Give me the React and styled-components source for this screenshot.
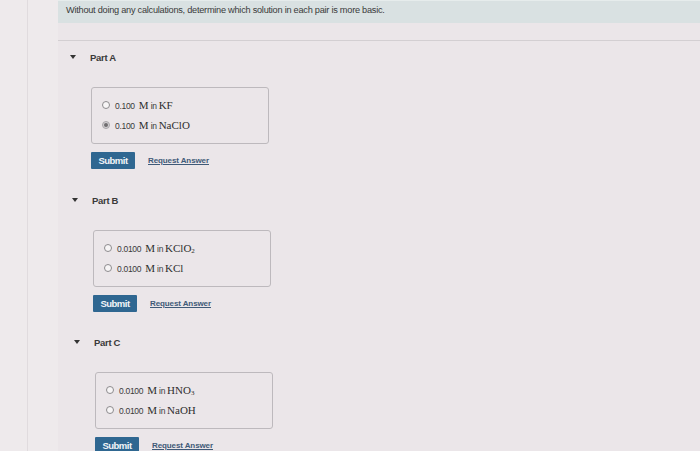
import React from "react";
import styled, { createGlobalStyle } from "styled-components";

const Global = createGlobalStyle`
  html, body { margin: 0; padding: 0; }
  body { background: #ebe6e9; font-family: "Liberation Sans", Arial, sans-serif; color: #333; }
`;

const Page = styled.div`
  display: flex;
  width: 700px;
  min-height: 451px;
  background: #ebe6e9;
  overflow: hidden;
`;

const Gutter = styled.div`
  width: 27px;
  flex: none;
  background: #eeeaec;
  border-right: 1px solid #e0dbde;
`;

const GutterInner = styled.div`
  width: 30px;
  flex: none;
  background: #eeeaec;
`;

const Main = styled.div`
  flex: 1;
  display: flex;
  flex-direction: column;
`;

const Banner = styled.div`
  height: 23px;
  background: #d9e1e2;
  border-top: 1px solid #e6ecec;
  box-sizing: border-box;
  padding-left: 8px;
  font-size: 9.2px;
  line-height: 19px;
  letter-spacing: -0.25px;
  color: #3a3a3a;
  white-space: nowrap;
`;

const Divider = styled.div`
  margin-top: 17px;
  border-top: 1px solid #d3cfd2;
`;

const Section = styled.section`
  display: flex;
  flex-direction: column;
  padding-left: ${(p) => p.$indent}px;
  margin-top: ${(p) => p.$top}px;
`;

const Header = styled.div`
  height: 20px;
  display: flex;
  align-items: center;
  font-size: 9.5px;
  font-weight: bold;
  color: #3a3a3a;
  letter-spacing: -0.3px;
`;

const Caret = styled.span`
  width: 0;
  height: 0;
  margin-left: 12px;
  margin-right: 14px;
  border-left: 3px solid transparent;
  border-right: 3px solid transparent;
  border-top: 4px solid #333;
`;

const OptionsBox = styled.div`
  margin-top: 20px;
  margin-left: 33px;
  width: 178px;
  height: 57px;
  box-sizing: border-box;
  border: 1px solid #bdb9bd;
  border-radius: 3px;
  padding: 7px 0 0 10px;
  display: flex;
  flex-direction: column;
`;

const Option = styled.label`
  height: 20px;
  display: flex;
  align-items: center;
  gap: 5px;
`;

const Radio = styled.span`
  width: 8px;
  height: 8px;
  box-sizing: border-box;
  border-radius: 50%;
  border: 1px solid ${(p) => (p.$checked ? "#a9a6a9" : "#8d8b8e")};
  background: ${(p) => (p.$checked ? "#d4d1d4" : "#f7f5f6")};
  display: flex;
  align-items: center;
  justify-content: center;
  &::after {
    content: "";
    width: 4px;
    height: 4px;
    border-radius: 50%;
    background: ${(p) => (p.$checked ? "#6f6d70" : "transparent")};
  }
`;

const OptionText = styled.span`
  font-size: 8.5px;
  color: #3a3a3a;
  letter-spacing: -0.3px;
  white-space: nowrap;
`;

const Serif = styled.span`
  font-family: "Liberation Serif", "Times New Roman", serif;
  font-size: 11px;
  letter-spacing: 0;
  color: #2e2e2e;
  margin: 0 2px;
`;

const Sub = styled.sub`
  font-size: 7px;
  vertical-align: -1px;
  line-height: 0;
`;

const Actions = styled.div`
  margin-top: 8px;
  margin-left: 33px;
  display: flex;
  align-items: center;
  gap: 13px;
`;

const SubmitButton = styled.button`
  width: 44px;
  height: 17px;
  padding: 0;
  border: none;
  border-radius: 1px;
  background: #2f6791;
  color: #f2f5f8;
  font-family: "Liberation Sans", Arial, sans-serif;
  font-size: 9.5px;
  font-weight: bold;
  letter-spacing: -0.5px;
`;

const RequestLink = styled.a`
  font-size: 8px;
  font-weight: bold;
  color: #3f5a78;
  text-decoration: underline;
  letter-spacing: -0.1px;
`;

const parts = [
  {
    name: "Part A",
    indent: 0,
    top: 6,
    options: [
      { conc: "0.100", salt: <>KF</>, checked: false },
      { conc: "0.100", salt: <>NaClO</>, checked: true },
    ],
  },
  {
    name: "Part B",
    indent: 2,
    top: 21,
    options: [
      { conc: "0.0100", salt: <>KClO<Sub>2</Sub></>, checked: false },
      { conc: "0.0100", salt: <>KCl</>, checked: false },
    ],
  },
  {
    name: "Part C",
    indent: 4,
    top: 20,
    options: [
      { conc: "0.0100", salt: <>HNO<Sub>3</Sub></>, checked: false },
      { conc: "0.0100", salt: <>NaOH</>, checked: false },
    ],
  },
];

export default function App() {
  return (
    <>
      <Global />
      <Page>
        <Gutter />
        <GutterInner />
        <Main>
          <Banner>
            Without doing any calculations, determine which solution in each pair is more basic.
          </Banner>
          <Divider />
          {parts.map((part) => (
            <Section key={part.name} $indent={part.indent} $top={part.top}>
              <Header>
                <Caret />
                {part.name}
              </Header>
              <OptionsBox>
                {part.options.map((o, i) => (
                  <Option key={i}>
                    <Radio $checked={o.checked} />
                    <OptionText>
                      {o.conc} <Serif>M</Serif>in<Serif>{o.salt}</Serif>
                    </OptionText>
                  </Option>
                ))}
              </OptionsBox>
              <Actions>
                <SubmitButton>Submit</SubmitButton>
                <RequestLink>Request Answer</RequestLink>
              </Actions>
            </Section>
          ))}
        </Main>
      </Page>
    </>
  );
}
